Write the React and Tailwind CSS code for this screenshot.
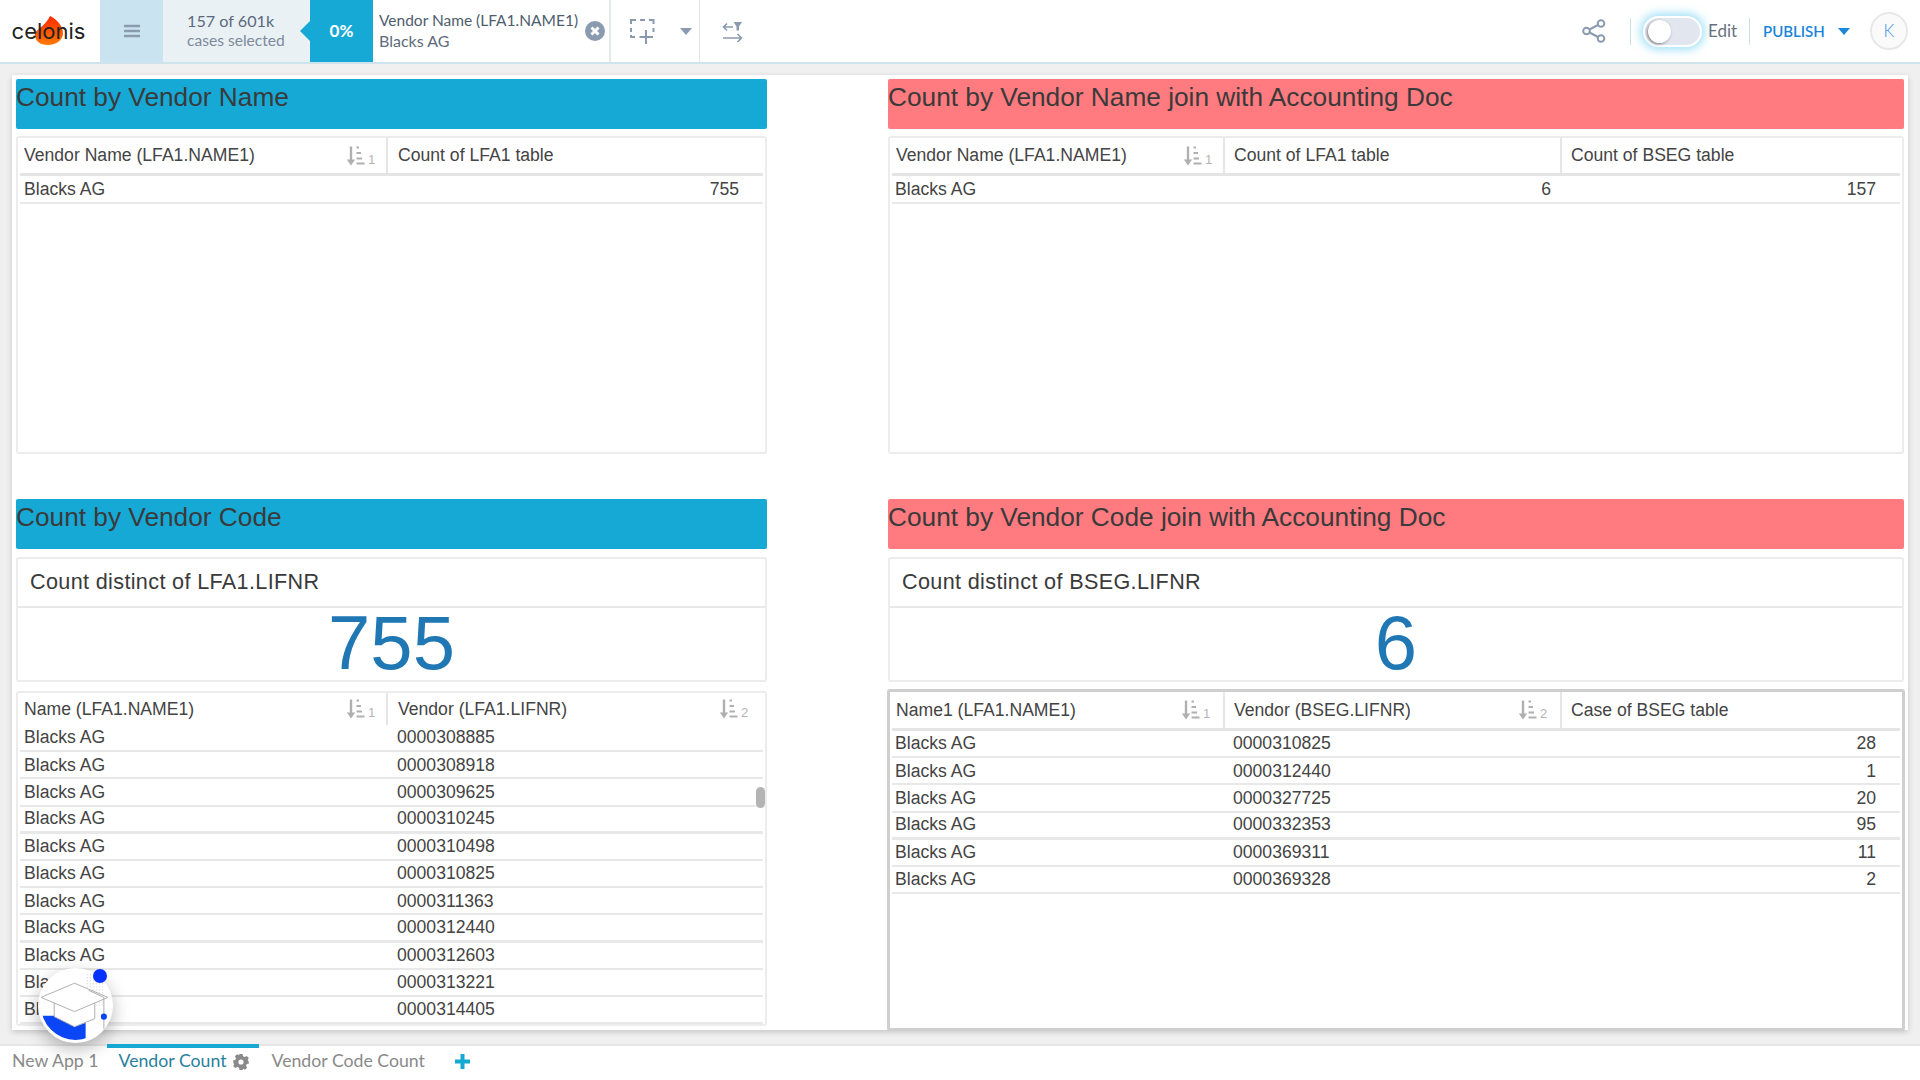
import React from "react";

const SANS = "font-['Liberation_Sans',Arial,sans-serif]";
const UI = "font-['Lato','Noto_Sans',sans-serif]";

function SortIcon({ n }) {
  return (
    <span className="flex items-end gap-[3px] text-[#b4b4b4]">
      <svg width="19" height="20" viewBox="0 0 19 20" fill="none">
        <path d="M5 0.5V16" stroke="#b0b0b0" strokeWidth="2.4" />
        <path d="M0.8 13.5H9.2L5 19.5Z" fill="#b0b0b0" />
        <path d="M10.5 1.5H13M10.5 7H15M10.5 12.5H16M10.5 17.5H18.5" stroke="#b0b0b0" strokeWidth="2.2" />
      </svg>
      <span className="text-[13px] leading-[13px] w-[7px]">{n}</span>
    </span>
  );
}

function Banner({ color, children }) {
  return (
    <div className={`h-[50px] rounded-[2px] ${color} text-[26.25px] leading-[36px] text-[#3a3a3a] ${SANS}`}>
      {children}
    </div>
  );
}

function HeaderCell({ label, sort, width, last, pad = "pl-[4px]", pr = "pr-[11px]" }) {
  return (
    <div className={`relative flex items-center justify-between ${pr} ${pad} ${last ? "" : "border-r-2 border-[#e6e6e6]"}`} style={{ width, height: "100%" }}>
      <span className="whitespace-nowrap">{label}</span>
      {sort ? <SortIcon n={sort} /> : null}
    </div>
  );
}

function TableHeader({ cols, height = 38, ruled = true }) {
  return (
    <div className={`flex mx-[2px] ${ruled ? "border-b-[3px] border-[#e4e4e4]" : ""}`} style={{ height }}>
      {cols.map((c, i) => (
        <HeaderCell key={i} label={c.label} sort={c.sort} width={c.w} last={i === cols.length - 1} pad={c.pad} pr={c.pr} />
      ))}
    </div>
  );
}

function Row({ cells, cols, thick, height = 27.2 }) {
  return (
    <div className={`flex items-center mx-[2px] whitespace-nowrap ${thick ? "border-b-[3px]" : "border-b-2"} border-[#e8e8e8]`} style={{ height }}>
      {cells.map((c, i) => (
        <div key={i} style={{ width: cols[i].w }} className={cols[i].right ? "text-right" : cols[i].cpad}>
          {c}
        </div>
      ))}
    </div>
  );
}

function Kpi({ title, value }) {
  return (
    <div className={`h-[125px] border-2 border-[#ececec] rounded-[3px] ${SANS}`}>
      <div className="h-[49px] flex items-center pl-[12px] text-[21.6px] text-[#3a3a3a] tracking-[0.35px] border-b-2 border-[#e8e8e8]">
        {title}
      </div>
      <div className="text-center text-[76px] leading-[70px] text-[#1f77b4]">{value}</div>
    </div>
  );
}

function Caret({ color = "#8a9bb0", w = 12, h = 7 }) {
  return (
    <svg width={w} height={h} viewBox="0 0 12 7">
      <path d="M0 0H12L6 7Z" fill={color} />
    </svg>
  );
}

function CapBadge() {
  return (
    <div className="absolute left-[38px] top-[968px] w-[75px] h-[75px] rounded-full bg-white shadow-[0_6px_18px_rgba(0,0,0,0.28)]">
      <svg width="75" height="75" viewBox="0 0 74 74">
        <defs>
          <clipPath id="capc">
            <circle cx="37" cy="37" r="34" />
          </clipPath>
          <pattern id="dots" width="3" height="3" patternUnits="userSpaceOnUse">
            <rect width="1.2" height="1.2" fill="#d8d8d8" />
          </pattern>
        </defs>
        <rect x="47" y="4" width="18" height="34" fill="url(#dots)" />
        <g clipPath="url(#capc)">
          <path d="M0 47H17L36 58L47 54V74H0Z" fill="#0a46f5" />
        </g>
        <path d="M16 32V48L36 58L56 50V32L36 42Z" fill="#fff" stroke="#a8a8a8" strokeWidth="0.9" />
        <path d="M3 29L36 15L69 29L36 43Z" fill="#fff" stroke="#a8a8a8" strokeWidth="0.9" />
        <path d="M50 22L65 29V60" fill="none" stroke="#a8a8a8" strokeWidth="0.9" />
        <circle cx="65" cy="48" r="3" fill="#0a46f5" />
      </svg>
      <span className="absolute left-[55px] top-[1px] w-[14px] h-[14px] rounded-full bg-[#0433ff]" />
    </div>
  );
}

export default function App() {
  const t1 = [
    { label: "Vendor Name (LFA1.NAME1)", sort: "1", w: 370 },
    { label: "Count of LFA1 table", w: 377, pad: "pl-[10px]" },
  ];
  const t1c = [{ w: 370, cpad: "pl-[4px]" }, { w: 349, right: true }];
  const t2 = [
    { label: "Vendor Name (LFA1.NAME1)", sort: "1", w: 333 },
    { label: "Count of LFA1 table", w: 337, pad: "pl-[9px]" },
    { label: "Count of BSEG table", w: 338, pad: "pl-[9px]" },
  ];
  const t2c = [
    { w: 333, cpad: "pl-[3px]" },
    { w: 326, right: true },
    { w: 325, right: true },
  ];
  const t3 = [
    { label: "Name (LFA1.NAME1)", sort: "1", w: 370 },
    { label: "Vendor (LFA1.LIFNR)", sort: "2", w: 377, pad: "pl-[10px]", pr: "pr-[15px]" },
  ];
  const t3c = [{ w: 370, cpad: "pl-[4px]" }, { w: 377, cpad: "pl-[9px]" }];
  const t4 = [
    { label: "Name1 (LFA1.NAME1)", sort: "1", w: 333, pr: "pr-[13px]" },
    { label: "Vendor (BSEG.LIFNR)", sort: "2", w: 337, pad: "pl-[9px]", pr: "pr-[13px]" },
    { label: "Case of BSEG table", w: 338, pad: "pl-[9px]" },
  ];
  const t4c = [
    { w: 333, cpad: "pl-[3px]" },
    { w: 338, cpad: "pl-[8px]" },
    { w: 313, right: true },
  ];
  const left = ["0000308885", "0000308918", "0000309625", "0000310245", "0000310498", "0000310825", "0000311363", "0000312440", "0000312603", "0000313221", "0000314405"];
  const right = [
    ["0000310825", "28"],
    ["0000312440", "1"],
    ["0000327725", "20"],
    ["0000332353", "95"],
    ["0000369311", "11"],
    ["0000369328", "2"],
  ];

  return (
    <div className={`relative w-[1920px] h-[1080px] overflow-hidden flex flex-col bg-[#f0f0f0] ${SANS}`}>
      {/* Top bar */}
      <div className={`h-[64px] shrink-0 flex bg-white border-b-2 border-[#cfe3ec] ${UI}`}>
        <div className="relative w-[100px] flex items-center justify-center">
          <svg className="absolute left-[35px] top-[15px]" width="28" height="31" viewBox="0 0 28 31">
            <defs>
              <linearGradient id="fl" x1="0.5" y1="0" x2="0.5" y2="1">
                <stop offset="0" stopColor="#ff2a00" />
                <stop offset="1" stopColor="#ff7a00" />
              </linearGradient>
            </defs>
            <path d="M15 1C20 3 28 10 28 18C28 26 20 30 13 30C5 30 0 26 0 20C0 14 9 13 15 1Z" fill="url(#fl)" />
          </svg>
          <span className="relative text-[22px] leading-none text-[#222] font-['Inter',sans-serif] -ml-[3px]">celonis</span>
        </div>
        <div className="w-[63px] bg-[#c9e4f0] flex items-center justify-center">
          <svg width="16" height="14" viewBox="0 0 16 14">
            <path d="M0 2H16M0 7H16M0 12H16" stroke="#8a9bb0" strokeWidth="2.6" />
          </svg>
        </div>
        <div className="w-[147px] bg-[#eaf1f5] flex flex-col justify-center pl-[24px] pb-[3px]">
          <span className="text-[16.2px] leading-[20px] text-[#5a6a7e]">157 of 601k</span>
          <span className="text-[15.6px] leading-[18px] text-[#7c8a9b]">cases selected</span>
        </div>
        <div className="relative w-[63px] bg-[#16a9d6] flex items-center justify-center text-white font-bold text-[17px]">
          <span className="absolute -left-[10px] top-[21px] w-0 h-0 border-y-[10px] border-y-transparent border-r-[10px] border-r-[#16a9d6]" />
          0%
        </div>
        <div className="relative w-[238px] border-r-2 border-[#e4e9ed] pl-[6px] flex items-center justify-between pr-[4px]">
          <div className="flex flex-col pb-[1px]">
            <span className="text-[15.5px] leading-[20px] text-[#4e5d6e] whitespace-nowrap">Vendor Name (LFA1.NAME1)</span>
            <span className="text-[16px] leading-[21px] text-[#5d6b7c]">Blacks AG</span>
          </div>
          <svg width="20" height="20" viewBox="0 0 20 20">
            <circle cx="10" cy="10" r="10" fill="#8a9bb0" />
            <path d="M6.5 6.5L13.5 13.5M13.5 6.5L6.5 13.5" stroke="#fff" strokeWidth="3" />
          </svg>
        </div>
        <div className="w-[89px] flex items-center border-r border-[#dcebf1] pl-[19px] gap-[25px]">
          <svg width="25" height="25" viewBox="0 0 25 25" fill="none" className="mt-[1px]">
            <path d="M1 5V1H6M10 1H15M19 1H23.5V5M23.5 9V13M1 9V13M1 16V18H5" stroke="#8a9bb0" strokeWidth="2" />
            <path d="M16 11V25M9.5 18H23" stroke="#8a9bb0" strokeWidth="2" />
          </svg>
          <Caret />
        </div>
        <div className="w-[70px] flex items-center pl-[22px]">
          <svg width="21" height="21" viewBox="0 0 21 21" fill="none">
            <path d="M11 6H1.5M5 2.5L1.5 6L5 9.5" stroke="#8a9bb0" strokeWidth="1.6" />
            <path d="M11.5 1H20L17 5.5V9.5H14.5V5.5Z" fill="#8a9bb0" />
            <path d="M1 17H19M15.5 13L19.5 17L15.5 21" stroke="#8a9bb0" strokeWidth="1.6" />
          </svg>
        </div>
        <div className="ml-auto flex items-center pr-[12px]">
          <svg width="24" height="24" viewBox="0 0 24 24" fill="none" className="mr-[24px] -mt-[1px]">
            <circle cx="4.5" cy="12" r="3.3" stroke="#8a9bb0" strokeWidth="2" />
            <circle cx="19" cy="4.5" r="3.3" stroke="#8a9bb0" strokeWidth="2" />
            <circle cx="19" cy="19.5" r="3.3" stroke="#8a9bb0" strokeWidth="2" />
            <path d="M7.5 10.5L16 6M7.5 13.5L16 18" stroke="#8a9bb0" strokeWidth="2" />
          </svg>
          <span className="w-px h-[27px] bg-[#c9e0ea]" />
          <div className="ml-[12px] w-[59px] h-[31px] rounded-full bg-[#e2e7ef] border-2 border-white shadow-[0_0_8px_3px_rgba(90,200,240,0.55)] flex items-center pl-[3px]">
            <span className="w-[23px] h-[23px] rounded-full bg-white shadow-[-1px_1px_3px_rgba(0,0,0,0.45)]" />
          </div>
          <span className="ml-[6px] w-[30px] text-[17px] text-[#68727f]">Edit</span>
          <span className="ml-[11px] w-px h-[27px] bg-[#c9e0ea]" />
          <span className="ml-[13px] w-[62px] text-[15px] font-semibold text-[#1c86d8]">PUBLISH</span>
          <span className="ml-[13px]"><Caret color="#1c86d8" /></span>
          <span className="ml-[20px] w-[38px] h-[38px] rounded-full bg-[#fafafa] border-2 border-[#e8e8e8] flex items-center justify-center text-[17px] font-light text-[#3f93d8]">K</span>
        </div>
      </div>

      {/* Canvas */}
      <div className="flex-1 min-h-0 pt-[11px] pl-[12px] pr-[12px] pb-[14px]">
        <div className="h-full bg-white shadow-[0_2px_6px_rgba(0,0,0,0.18)] pt-[4px] pl-[4px] pr-[4px] grid grid-cols-[751px_1016px] gap-x-[121px] text-[17.6px] text-[#444]">
          {/* Left column */}
          <div className="flex flex-col">
            <Banner color="bg-[#16a9d6]">Count by Vendor Name</Banner>
            <div className="mt-[7px] h-[318px] border-2 border-[#ececec] rounded-[3px]">
              <TableHeader cols={t1} height={38} />
              <Row cells={["Blacks AG", "755"]} cols={t1c} height={28} />
            </div>
            <div className="mt-[45px]">
              <Banner color="bg-[#16a9d6]">Count by Vendor Code</Banner>
            </div>
            <div className="mt-[8px]">
              <Kpi title="Count distinct of LFA1.LIFNR" value="755" />
            </div>
            <div className="relative mt-[9px] h-[335px] border-2 border-[#ececec] rounded-[3px] overflow-hidden">
              <TableHeader cols={t3} height={32} ruled={false} />
              {left.map((code) => (
                <Row key={code} cells={["Blacks AG", code]} cols={t3c} thick={code === "0000310245" || code === "0000312440"} />
              ))}
              <span className="absolute right-0 top-[94px] w-[9px] h-[21px] rounded-full bg-[#b4b4b4]" />
            </div>
          </div>

          {/* Right column */}
          <div className="flex flex-col">
            <Banner color="bg-[#ff7b80]">Count by Vendor Name join with Accounting Doc</Banner>
            <div className="mt-[7px] h-[318px] border-2 border-[#ececec] rounded-[3px]">
              <TableHeader cols={t2} height={38} />
              <Row cells={["Blacks AG", "6", "157"]} cols={t2c} height={28} />
            </div>
            <div className="mt-[45px]">
              <Banner color="bg-[#ff7b80]">Count by Vendor Code join with Accounting Doc</Banner>
            </div>
            <div className="mt-[8px]">
              <Kpi title="Count distinct of BSEG.LIFNR" value="6" />
            </div>
            <div className="mt-[7px] -mx-[1px] h-[342px] border-[3px] border-[#cfcfcf] rounded-[3px] overflow-hidden">
              <TableHeader cols={t4} height={39} />
              {right.map(([code, n]) => (
                <Row key={code} cells={["Blacks AG", code, n]} cols={t4c} thick={code === "0000332353"} />
              ))}
            </div>
          </div>
        </div>
      </div>

      {/* Tabs */}
      <div className={`h-[36px] shrink-0 bg-white border-t-2 border-[#e6e6e6] flex items-center pb-[3px] text-[17.7px] text-[#8a8a8a] ${UI}`}>
        <span className="ml-[12px]">New App 1</span>
        <span className="relative ml-[8px] w-[152px] h-full flex items-center pl-[12px] gap-[6px] text-[#2a7f9e]">
          <span className="absolute left-0 -top-[2px] w-full h-[4px] bg-[#16a9d6]" />
          Vendor Count
          <svg width="16" height="16" viewBox="0 0 16 16">
            <path d="M6.5 0H9.5L10 2.2L11.7 3L13.7 1.9L15.8 4L14.7 6L15.5 7L16 9.5L13.8 10L13 11.7L14.1 13.7L12 15.8L10 14.7L9.5 16H6.5L6 13.8L4.3 13L2.3 14.1L0.2 12L1.3 10L0.5 9.5L0 6.5L2.2 6L3 4.3L1.9 2.3L4 0.2L6 1.3Z" fill="#8a8a8a" />
            <circle cx="8" cy="8" r="2.6" fill="#fff" />
          </svg>
        </span>
        <span className="ml-[13px]">Vendor Code Count</span>
        <svg width="15" height="15" viewBox="0 0 15 15" className="ml-[30px]">
          <path d="M7.5 0V15M0 7.5H15" stroke="#16a9d6" strokeWidth="4" />
        </svg>
      </div>
      <CapBadge />
    </div>
  );
}
